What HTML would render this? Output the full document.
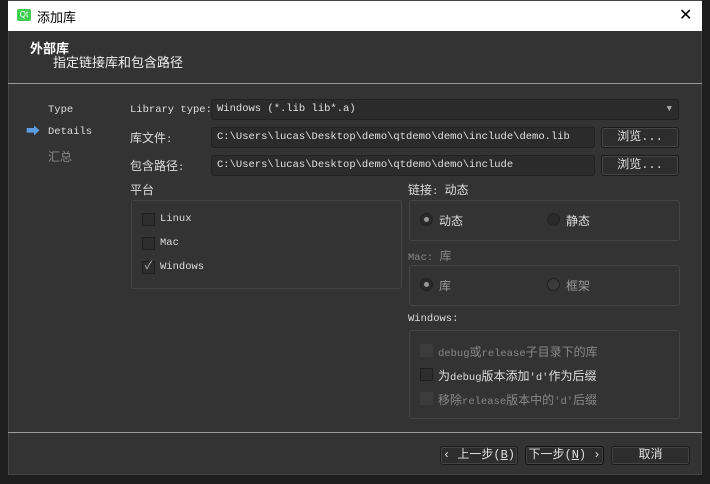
<!DOCTYPE html>
<html><head><meta charset="utf-8"><style>
*{box-sizing:border-box;margin:0;padding:0}
body{width:710px;height:484px;background:#1e1e1e;position:relative;overflow:hidden;font-family:"Liberation Mono","Noto Sans CJK SC",monospace;font-size:12px;color:#ddd}
.a{position:absolute}
.m{font-family:"Liberation Mono",monospace;font-size:10.5px}
.dlg{left:8px;top:0;width:694px;height:475px;background:#333;border:1px solid #444}
.inp{background:#2b2b2b;border:1px solid #222;border-radius:3px;height:21px;line-height:19px;padding-left:5px;color:#e0e0e0}
.btn{background:#2d2d2d;border:1px solid #1c1c1c;border-radius:3px;height:19px;line-height:17px;text-align:center;color:#e0e0e0;box-shadow:inset 0 0 0 1px #444}
.grp{border:1px solid #444;border-radius:3px}
.cb{width:13px;height:13px;border:1px solid #1f1f1f;background:#2e2e2e}
.rd{width:13px;height:13px;border-radius:50%;background:#2a2a2a;border:1px solid #222}
</style></head><body>
<div class="a dlg"></div>
<div class="a" style="left:8px;top:1px;width:694px;height:30px;background:#fff"></div>
<div class="a" style="left:17px;top:9px;width:14px;height:12px;background:#41cd52;border-radius:2px;color:#fff;font-size:8px;line-height:12px;text-align:center;font-family:'Liberation Sans',sans-serif">Qt</div>
<div class="a" style="left:37px;top:7px;color:#000;font-size:13px">添加库</div>
<div class="a" style="left:679px;top:5px;color:#000;font-size:16px;font-family:'DejaVu Sans',sans-serif">✕</div>
<div class="a" style="left:30px;top:38px;font-weight:bold;color:#fff;font-size:13px">外部库</div>
<div class="a" style="left:53px;top:52px;color:#eee;font-size:13px">指定链接库和包含路径</div>
<div class="a" style="left:8px;top:83px;width:694px;height:1px;background:#999"></div>
<div class="a" style="left:8px;top:432px;width:694px;height:1px;background:#999"></div>
<div class="a m" style="left:48px;top:104px">Type</div>
<div class="a" style="left:26px;top:128px;width:14px;height:10px;color:#5a9de0;font-size:14px;line-height:10px">➡</div>
<div class="a m" style="left:48px;top:126px">Details</div>
<div class="a" style="left:48px;top:148px;color:#888">汇总</div>
<div class="a" style="left:130px;top:102px"><span class="m">Library type:</span></div>
<div class="a inp m" style="left:211px;top:99px;width:468px">Windows (*.lib lib*.a)<span class="a" style="right:6px;top:0;color:#aaa;font-size:9px">▼</span></div>
<div class="a" style="left:130px;top:129px">库文件<span class="m">:</span></div>
<div class="a inp m" style="left:211px;top:127px;width:384px">C:\Users\lucas\Desktop\demo\qtdemo\demo\include\demo.lib</div>
<div class="a btn" style="left:601px;top:127px;width:78px;height:21px;line-height:19px">浏览...</div>
<div class="a" style="left:130px;top:157px">包含路径<span class="m">:</span></div>
<div class="a inp m" style="left:211px;top:155px;width:384px">C:\Users\lucas\Desktop\demo\qtdemo\demo\include</div>
<div class="a btn" style="left:601px;top:155px;width:78px;height:21px;line-height:19px">浏览...</div>
<div class="a" style="left:130px;top:181px">平台</div>
<div class="a grp" style="left:131px;top:200px;width:271px;height:89px"></div>
<div class="a cb" style="left:142px;top:213px"></div><div class="a m" style="left:160px;top:213px">Linux</div>
<div class="a cb" style="left:142px;top:237px"></div><div class="a m" style="left:160px;top:237px">Mac</div>
<div class="a cb" style="left:142px;top:261px;color:#bbb;font-size:11px;line-height:11px;text-align:center">✓</div><div class="a m" style="left:160px;top:261px">Windows</div>
<div class="a" style="left:408px;top:181px">链接<span class="m">: </span>动态</div>
<div class="a grp" style="left:409px;top:200px;width:271px;height:41px"></div>
<div class="a rd" style="left:420px;top:213px"><div class="a" style="left:3px;top:3px;width:5px;height:5px;border-radius:50%;background:#999"></div></div>
<div class="a" style="left:439px;top:212px">动态</div>
<div class="a rd" style="left:547px;top:213px"></div>
<div class="a" style="left:566px;top:212px">静态</div>
<div class="a" style="left:408px;top:247px;color:#888"><span class="m">Mac: </span>库</div>
<div class="a grp" style="left:409px;top:265px;width:271px;height:41px"></div>
<div class="a rd" style="left:420px;top:278px"><div class="a" style="left:3px;top:3px;width:5px;height:5px;border-radius:50%;background:#999"></div></div>
<div class="a" style="left:439px;top:277px;color:#999">库</div>
<div class="a rd" style="left:547px;top:278px;background:#3a3a3a"></div>
<div class="a" style="left:566px;top:277px;color:#999">框架</div>
<div class="a m" style="left:408px;top:313px">Windows:</div>
<div class="a grp" style="left:409px;top:330px;width:271px;height:89px"></div>
<div class="a cb" style="left:420px;top:344px;background:#3c3c3c;border-color:#3c3c3c"></div><div class="a" style="left:438px;top:343px;color:#888"><span class="m">debug</span>或<span class="m">release</span>子目录下的库</div>
<div class="a cb" style="left:420px;top:368px"></div><div class="a" style="left:438px;top:367px">为<span class="m">debug</span>版本添加<span class="m">'d'</span>作为后缀</div>
<div class="a cb" style="left:420px;top:392px;background:#3c3c3c;border-color:#3c3c3c"></div><div class="a" style="left:438px;top:391px;color:#888">移除<span class="m">release</span>版本中的<span class="m">'d'</span>后缀</div>
<div class="a btn" style="left:440px;top:446px;width:78px">‹ 上一步(<u>B</u>)</div>
<div class="a btn" style="left:525px;top:446px;width:79px;border-color:#111">下一步(<u>N</u>) ›</div>
<div class="a btn" style="left:611px;top:446px;width:79px">取消</div>
</body></html>
